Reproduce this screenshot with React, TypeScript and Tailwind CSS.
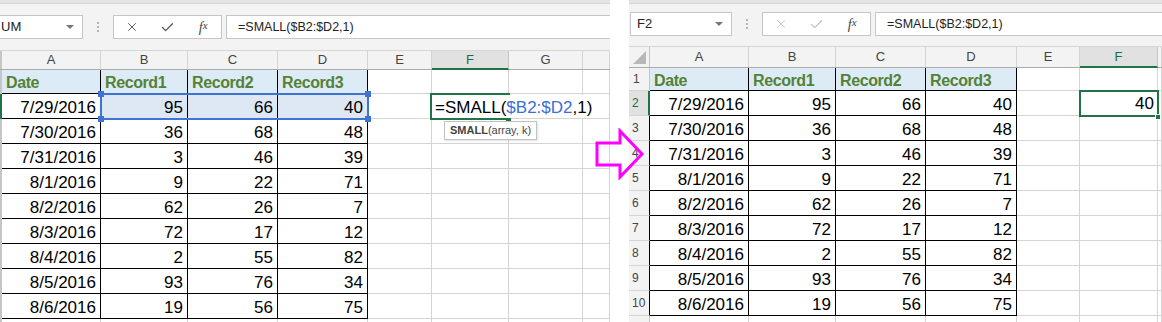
import { Check, X } from "lucide-react";
import type { ReactNode } from "react";

type Col = { label: string; w: string };

const rows: [string, number, number, number][] = [
  ["7/29/2016", 95, 66, 40],
  ["7/30/2016", 36, 68, 48],
  ["7/31/2016", 3, 46, 39],
  ["8/1/2016", 9, 22, 71],
  ["8/2/2016", 62, 26, 7],
  ["8/3/2016", 72, 17, 12],
  ["8/4/2016", 2, 55, 82],
  ["8/5/2016", 93, 76, 34],
  ["8/6/2016", 19, 56, 75],
];

const leftCols: Col[] = [
  { label: "A", w: "w-[99px]" },
  { label: "B", w: "w-[87px]" },
  { label: "C", w: "w-[90px]" },
  { label: "D", w: "w-[90px]" },
  { label: "E", w: "w-[64px]" },
  { label: "F", w: "w-[77px]" },
  { label: "G", w: "w-[74px]" },
  { label: "", w: "flex-1" },
];

const rightCols: Col[] = [
  { label: "A", w: "w-[99px]" },
  { label: "B", w: "w-[87px]" },
  { label: "C", w: "w-[90px]" },
  { label: "D", w: "w-[91px]" },
  { label: "E", w: "w-[63px]" },
  { label: "F", w: "w-[78px]" },
  { label: "", w: "flex-1" },
];

const Dots = () => (
  <div className="flex w-[30px] flex-col items-center justify-center gap-[2px] self-center">
    <span className="h-[2px] w-[2px] bg-[#b5b5b5]" />
    <span className="h-[2px] w-[2px] bg-[#b5b5b5]" />
    <span className="h-[2px] w-[2px] bg-[#b5b5b5]" />
  </div>
);

const FormulaBar = ({
  name,
  editing,
  cropped,
}: {
  name: string;
  editing: boolean;
  cropped: boolean;
}) => (
  <div className="flex h-[24px] items-stretch">
    <div
      className={
        cropped
          ? "flex w-[83px] items-center justify-between border-y border-r border-[#c6c6c6] bg-white pl-[1px] pr-[8px]"
          : "ml-[1px] flex w-[102px] items-center justify-between border border-[#c6c6c6] bg-white pl-[6px] pr-[8px]"
      }
    >
      <span className="text-[13px] text-[#222]">{name}</span>
      <span className="h-0 w-0 border-x-[4px] border-t-[4px] border-x-transparent border-t-[#777]" />
    </div>
    <Dots />
    <div className="flex w-[109px] items-center border border-[#c6c6c6] bg-white">
      <span className="flex w-[36px] justify-center">
        <X
          className={editing ? "h-[14px] w-[14px] text-[#555]" : "h-[14px] w-[14px] text-[#c3c3c3]"}
          strokeWidth={1.6}
        />
      </span>
      <span className="flex w-[36px] justify-center">
        <Check
          className={editing ? "h-[15px] w-[15px] text-[#555]" : "h-[15px] w-[15px] text-[#c3c3c3]"}
          strokeWidth={2}
        />
      </span>
      <span className="flex w-[36px] justify-center font-['Liberation_Serif',serif] text-[14px] italic text-[#444]">
        f<span className="text-[11px]">x</span>
      </span>
    </div>
    <div className="ml-[4px] flex flex-1 items-center border-y border-l border-[#c6c6c6] bg-white pl-[11px] text-[12.5px] text-[#222]">
      =SMALL($B2:$D2,1)
    </div>
  </div>
);

const Panel = ({
  cols,
  rowHdr,
  name,
  editing,
  cropped,
  barTop,
  barH,
  headH,
  row1H,
  children,
}: {
  cols: Col[];
  rowHdr: "sliver" | "full";
  name: string;
  editing: boolean;
  cropped: boolean;
  barTop: string;
  barH: string;
  headH: string;
  row1H: string;
  children?: ReactNode;
}) => {
  const full = rowHdr === "full";
  const hdrBorder = (r: number) =>
    r === 2 ? "border-r-2 border-r-[#217346]" : r === 1 ? "border-r border-r-[#c6c6c6]" : "border-r border-r-black";

  return (
    <div className="relative flex h-full flex-col overflow-hidden">
      <div className={`${barH} flex shrink-0 flex-col bg-[#f3f3f3]`}>
        <div className="h-[4px] border-b border-[#d6d6d6] bg-[#e4e4e4]" />
        <div className={barTop}>
          <FormulaBar name={name} editing={editing} cropped={cropped} />
        </div>
      </div>

      {/* column letters */}
      <div className={`${headH} flex shrink-0 border-y border-b-[#ababab] border-t-[#d6d6d6] bg-[#f3f3f3] text-[13px] text-[#444]`}>
        {full ? (
          <div className="relative w-[21px] border-r border-[#c6c6c6]">
            <span className="absolute bottom-[3px] right-[3px] h-0 w-0 border-b-[13px] border-l-[13px] border-b-[#b8b8b8] border-l-transparent" />
          </div>
        ) : (
          <div className="w-[2px] bg-[#c6c6c6]" />
        )}
        {cols.map((c, i) => (
          <div
            key={i}
            className={
              c.label === "F"
                ? `${c.w} -mb-px flex items-center justify-center border-r border-b-2 border-r-[#c6c6c6] border-b-[#217346] bg-[#e1e1e1] text-[#1d6b40]`
                : `${c.w} flex items-center justify-center border-r border-[#d4d4d4]`
            }
          >
            {c.label}
          </div>
        ))}
      </div>

      {/* row 1: table headings */}
      <div className={`${row1H} flex shrink-0`}>
        {full ? (
          <div className={`w-[21px] border-b border-b-[#d4d4d4] bg-[#f3f3f3] pl-[4px] text-[12px] leading-[22px] text-[#444] ${hdrBorder(1)}`}>
            1
          </div>
        ) : (
          <div className="w-[2px] bg-[#c6c6c6]" />
        )}
        {cols.map((c, i) => (
          <div
            key={i}
            className={
              i < 4
                ? `${c.w} border-r border-b border-black bg-[#ddebf7] pl-[4px] pt-[3px] text-[16px] font-bold leading-[19px] tracking-[-0.4px] text-[#548235]`
                : `${c.w} border-r border-b border-[#d4d4d4]`
            }
          >
            {i === 0 ? "Date" : i < 4 ? `Record${i}` : ""}
          </div>
        ))}
      </div>

      {/* data rows */}
      {[...rows, null].map((r, idx) => {
        const n = idx + 2;
        return (
          <div key={n} className="flex h-[25px] shrink-0">
            {full ? (
              <div
                className={`w-[21px] border-b border-b-[#d4d4d4] pl-[3px] text-[12px] leading-[24px] ${
                  n === 2 ? "bg-[#e1e1e1] text-[#1d6b40]" : "bg-[#f3f3f3] text-[#444]"
                } ${r ? hdrBorder(n) : "border-r border-r-[#c6c6c6]"}`}
              >
                {r ? n : ""}
              </div>
            ) : (
              <div className={n === 2 ? "w-[2px] bg-[#217346]" : "w-[2px] bg-[#c6c6c6]"} />
            )}
            {cols.map((c, i) => {
              const inTable = r !== null && i < 4;
              const sel = !full && n === 2 && i >= 1 && i <= 3;
              return (
                <div
                  key={i}
                  className={
                    inTable
                      ? `${c.w} border-r border-b border-black pr-[4px] pt-[3px] text-right text-[17px] leading-[21px] text-black ${
                          sel ? "bg-[#dde8f4]" : ""
                        }`
                      : `${c.w} border-r border-b border-[#d4d4d4]`
                  }
                >
                  {inTable ? String(r![i]) : ""}
                </div>
              );
            })}
          </div>
        );
      })}
      {children}
    </div>
  );
};

export default function App() {
  return (
    <div className="relative flex h-[322px] w-[1162px] overflow-hidden bg-white font-['Liberation_Sans',Arial,sans-serif]">
      <div className="h-full w-[610px] shrink-0">
        <Panel
          cols={leftCols}
          rowHdr="sliver"
          name="UM"
          editing
          cropped
          barH="h-[50px]"
          barTop="mt-[11px]"
          headH="h-[20px]"
          row1H="h-[24px]"
        >
          {/* range highlight B2:D2 */}
          <div className="absolute left-[100px] top-[93px] h-[27px] w-[269px] border-2 border-[#3f73d3]" />
          <span className="absolute left-[98px] top-[91px] h-[6px] w-[6px] bg-[#3f73d3]" />
          <span className="absolute left-[365px] top-[91px] h-[6px] w-[6px] bg-[#3f73d3]" />
          <span className="absolute left-[98px] top-[116px] h-[6px] w-[6px] bg-[#3f73d3]" />
          <span className="absolute left-[365px] top-[116px] h-[6px] w-[6px] bg-[#3f73d3]" />

          {/* cell being edited */}
          <div className="absolute left-[430px] top-[93px] h-[27px] w-[80px] border-2 border-[#217346]" />
          <span className="absolute left-[506px] top-[117px] h-[5px] w-[5px] bg-[#217346]" />
          <div className="absolute left-[432px] top-[95px] h-[23px] whitespace-nowrap bg-white pl-[3px] pr-[2px] pt-[2px] text-[17px] leading-[21px] text-black">
            =SMALL(<span className="text-[#3b6fd4]">$B2:$D2</span>,1)
          </div>
          <div className="absolute left-[444px] top-[121px] h-[19px] whitespace-nowrap border border-[#c2c2c2] bg-white px-[5px] text-[11px] leading-[17px] text-[#444] shadow-[1px_1px_2px_rgba(0,0,0,0.12)]">
            <span className="font-bold">SMALL</span>(array, k)
          </div>
        </Panel>
      </div>

      <div className="w-[19px] shrink-0" />

      <div className="h-full w-[533px] shrink-0">
        <Panel
          cols={rightCols}
          rowHdr="full"
          name="F2"
          editing={false}
          cropped={false}
          barH="h-[46px]"
          barTop="mt-[8px]"
          headH="h-[22px]"
          row1H="h-[23px]"
        >
          <div className="absolute left-[450px] top-[90px] flex h-[27px] w-[80px] items-start justify-end border-2 border-[#217346] bg-white pr-[3px] pt-[1px] text-[17px] leading-[21px] text-black">
            40
          </div>
          <span className="absolute left-[526px] top-[114px] h-[6px] w-[6px] border border-white bg-[#217346]" />
        </Panel>
      </div>

      {/* pink arrow */}
      <svg
        className="absolute left-[594px] top-[128px]"
        width="52"
        height="52"
        viewBox="0 0 52 52"
      >
        <polygon
          points="3,15 26,15 26,3 48,26 26,49 26,37 3,37"
          fill="none"
          stroke="#ff00ff"
          strokeWidth="3"
        />
      </svg>
    </div>
  );
}
